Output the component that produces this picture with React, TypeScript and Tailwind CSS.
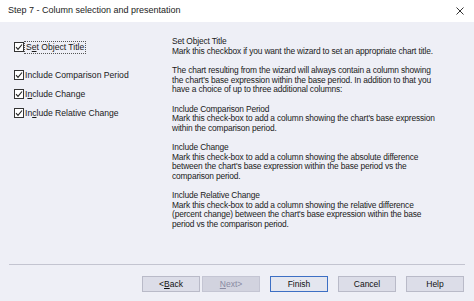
import React from "react";

function Box() {
  return (
    <span className="inline-flex w-[10px] h-[10px] border border-[#333] bg-white items-center justify-center shrink-0">
      <svg width="8" height="8" viewBox="0 0 8 8">
        <path d="M1 4.2 L3 6.3 L7 1.5" fill="none" stroke="#222" strokeWidth="1.1" />
      </svg>
    </span>
  );
}

function Btn({ children, variant }: { children: React.ReactNode; variant?: "default" | "disabled" }) {
  const base = "w-[58px] h-[16px] flex items-center justify-center text-[8.5px] border";
  const cls =
    variant === "default"
      ? "border-[#3d6fc4] bg-[#e4e6ef] text-[#111]"
      : variant === "disabled"
      ? "border-[#c4c5d3] bg-[#d2d3df] text-[#8a8ba3]"
      : "border-[#b9bac8] bg-[#dcdde8] text-[#111]";
  return <div className={`${base} ${cls}`}>{children}</div>;
}

export default function App() {
  const desc = "font-['Liberation_Sans',Arial,sans-serif] text-[8.4px] leading-[9.5px] text-[#1a1a1a] tracking-[-0.15px]";
  const lbl = "font-['Liberation_Sans',Arial,sans-serif] text-[8.6px] text-[#1a1a1a] leading-[11px]";
  return (
    <div className="w-[474px] h-[301px] bg-[#eeeff6] flex flex-col overflow-hidden">
      <div className="h-[22px] bg-white flex items-center justify-between pl-[8px] pr-[10px]">
        <span className="font-['Liberation_Sans',Arial,sans-serif] text-[9px] text-[#222]">Step 7 - Column selection and presentation</span>
        <svg width="8" height="8" viewBox="0 0 8 8">
          <path d="M0.5 0.5 L7.5 7.5 M7.5 0.5 L0.5 7.5" stroke="#333" strokeWidth="1" />
        </svg>
      </div>
      <div className="flex flex-1">
        <div className="w-[172px] shrink-0 pl-[14px] pt-[19px] flex flex-col">
          <div className="flex items-center gap-0 h-[12px]">
            <Box />
            <span className={`${lbl} border border-dotted border-[#555] px-[1px]`}>
              S<u>e</u>t Object Title
            </span>
          </div>
          <div className="flex items-center gap-[1px] h-[12px] mt-[16px]">
            <Box />
            <span className={lbl}>Include Comparison Period</span>
          </div>
          <div className="flex items-center gap-[1px] h-[12px] mt-[7px]">
            <Box />
            <span className={lbl}>
              I<u>n</u>clude Change
            </span>
          </div>
          <div className="flex items-center gap-[1px] h-[12px] mt-[7px]">
            <Box />
            <span className={lbl}>
              In<u>c</u>lude Relative Change
            </span>
          </div>
        </div>
        <div className={`pt-[15px] flex flex-col gap-[10px] ${desc}`}>
          <p>
            Set Object Title
            <br />
            Mark this checkbox if you want the wizard to set an appropriate chart title.
          </p>
          <p>
            The chart resulting from the wizard will always contain a column showing
            <br />
            the chart's base expression within the base period. In addition to that you
            <br />
            have a choice of up to three additional columns:
          </p>
          <p>
            Include Comparison Period
            <br />
            Mark this check-box to add a column showing the chart's base expression
            <br />
            within the comparison period.
          </p>
          <p>
            Include Change
            <br />
            Mark this check-box to add a column showing the absolute difference
            <br />
            between the chart's base expression within the base period vs the
            <br />
            comparison period.
          </p>
          <p>
            Include Relative Change
            <br />
            Mark this check-box to add a column showing the relative difference
            <br />
            (percent change) between the chart's base expression within the base
            <br />
            period vs the comparison period.
          </p>
        </div>
      </div>
      <div className="mx-[9px] h-px bg-[#c3c4d0]" />
      <div className="flex justify-end pr-[10px] pt-[11px] pb-[9px] font-['Liberation_Sans',Arial,sans-serif]">
        <div className="flex gap-[2px]">
          <Btn>
            &lt;<u>B</u>ack
          </Btn>
          <Btn variant="disabled">
            <u>N</u>ext&gt;
          </Btn>
        </div>
        <div className="flex gap-[10px] ml-[10px]">
          <Btn variant="default">Finish</Btn>
          <Btn>Cancel</Btn>
          <Btn>Help</Btn>
        </div>
      </div>
    </div>
  );
}
